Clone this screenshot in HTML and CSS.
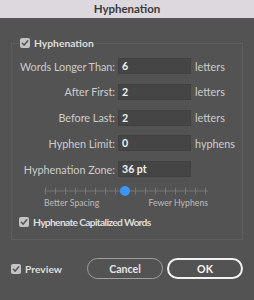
FILE: index.html
```html
<!DOCTYPE html>
<html lang="en">
<head>
<meta charset="utf-8">
<title>Hyphenation</title>
<link rel="stylesheet" href="styles.css">
</head>
<body>
<div class="dialog">
  <div class="titlebar">Hyphenation</div>
  <fieldset class="group">
    <legend class="check legend">
      <span class="box"><svg width="10" height="10" viewBox="0 0 10 10"><path d="M2.3 5.2 L4.2 7.1 L7.8 2.8" fill="none" stroke="#555" stroke-width="1.5" stroke-linecap="round" stroke-linejoin="round"/></svg></span>
      <span>Hyphenation</span>
    </legend>
    <div class="fields">
      <span class="lbl">Words Longer Than:</span><span class="input">6</span><span class="unit">letters</span>
      <span class="lbl">After First:</span><span class="input">2</span><span class="unit">letters</span>
      <span class="lbl">Before Last:</span><span class="input">2</span><span class="unit">letters</span>
      <span class="lbl">Hyphen Limit:</span><span class="input">0</span><span class="unit">hyphens</span>
      <span class="lbl">Hyphenation Zone:</span><span class="input">36 pt</span><span class="unit"></span>
    </div>
    <div class="slider">
      <div class="track">
        <svg width="164" height="8" viewBox="0 0 164 8">
          <line x1="0" y1="4" x2="164" y2="4" stroke="#777" stroke-width="1"/>
          <path d="M1.5 0.5v7M11.5 0.5v7M21.5 0.5v7M31.5 0.5v7M41.5 0.5v7M51.5 0.5v7M61.5 0.5v7M71.5 0.5v7M91.5 0.5v7M101.5 0.5v7M111.5 0.5v7M121.5 0.5v7M131.5 0.5v7M141.5 0.5v7M151.5 0.5v7M161.5 0.5v7" stroke="#777" stroke-width="1"/>
        </svg>
        <span class="thumb"></span>
      </div>
      <div class="slider-labels"><span>Better Spacing</span><span>Fewer Hyphens</span></div>
    </div>
    <div class="check cap">
      <span class="box"><svg width="10" height="10" viewBox="0 0 10 10"><path d="M2.3 5.2 L4.2 7.1 L7.8 2.8" fill="none" stroke="#555" stroke-width="1.5" stroke-linecap="round" stroke-linejoin="round"/></svg></span>
      <span class="cap-text">Hyphenate Capitalized Words</span>
    </div>
  </fieldset>
  <div class="footer">
    <div class="check preview">
      <span class="box"><svg width="10" height="10" viewBox="0 0 10 10"><path d="M2.3 5.2 L4.2 7.1 L7.8 2.8" fill="none" stroke="#555" stroke-width="1.5" stroke-linecap="round" stroke-linejoin="round"/></svg></span>
      <span>Preview</span>
    </div>
    <div class="buttons">
      <button class="btn">Cancel</button>
      <button class="btn ok">OK</button>
    </div>
  </div>
</div>
</body>
</html>
```
FILE: styles.css
```css
html, body {
  margin: 0;
  padding: 0;
}
body {
  background: #535353;
  font-family: Lato, "Open Sans", "Liberation Sans", sans-serif;
  color: #cfcfcf;
  width: 254px;
  height: 300px;
  overflow: hidden;
}
.dialog {
  display: flex;
  flex-direction: column;
}
.titlebar {
  height: 18px;
  line-height: 18px;
  background: #ddd8de;
  color: #3a3a3a;
  text-align: center;
  font-weight: bold;
  font-size: 11.5px;
}
.group {
  margin: 19px 11px 0 11px;
  padding: 0 0 11px 0;
  border: 1px solid #5f5f5f;
  min-width: 0;
}
.check {
  display: flex;
  align-items: center;
  gap: 4px;
  height: 12px;
  font-size: 10.3px;
  font-weight: bold;
  color: #dedede;
}
.cap-text {
  letter-spacing: -0.7px;
}
.legend {
  margin-left: 7px;
  padding: 0 1px;
}
.box {
  width: 10px;
  height: 10px;
  border-radius: 2px;
  background: #c4c4c4;
  display: flex;
}
.fields {
  margin-top: 9px;
  display: grid;
  grid-template-columns: 103px 73px auto;
  column-gap: 3px;
  row-gap: 9.75px;
  align-items: center;
  font-size: 10.8px;
}
.lbl {
  text-align: right;
  color: #cdcdcd;
}
.input {
  box-sizing: border-box;
  height: 16px;
  line-height: 14px;
  background: #454545;
  border: 1px solid #404040;
  padding-left: 3px;
  color: #f2f2f2;
  font-size: 10.6px;
  font-weight: bold;
}
.unit {
  padding-left: 1px;
  color: #cdcdcd;
}
.slider {
  margin: 10px 0 0 32px;
  width: 164px;
}
.track {
  position: relative;
  height: 8px;
}
.track svg {
  display: block;
}
.thumb {
  position: absolute;
  left: 76px;
  top: -1px;
  width: 10px;
  height: 10px;
  border-radius: 50%;
  background: #3a97f5;
}
.slider-labels {
  margin-top: 1.5px;
  display: flex;
  justify-content: space-between;
  font-size: 8.7px;
  line-height: 11px;
  color: #bcbcbc;
}
.cap {
  margin: 8.5px 0 0 7px;
}
.footer {
  margin-top: 18px;
  padding: 0 11px;
  display: flex;
  align-items: center;
  justify-content: space-between;
}
.buttons {
  display: flex;
  gap: 4px;
}
.btn {
  box-sizing: border-box;
  width: 76px;
  height: 21px;
  border-radius: 11px;
  border: 1px solid #a0a0a0;
  background: transparent;
  color: #e4e4e4;
  font-family: inherit;
  font-size: 10.6px;
  font-weight: bold;
  padding: 0;
}
.btn.ok {
  border: 2px solid #f2f2f2;
  color: #f4f4f4;
}
```
